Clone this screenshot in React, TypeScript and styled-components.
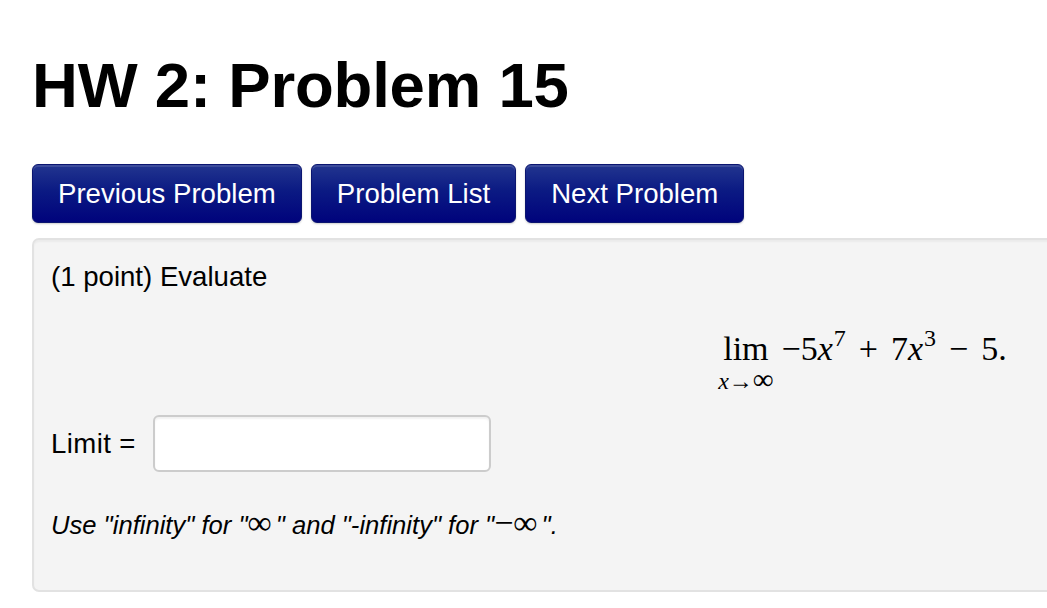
import React from "react";
import styled, { createGlobalStyle } from "styled-components";

const Global = createGlobalStyle`
  html, body { margin: 0; padding: 0; background: #fff; overflow: hidden; }
  body { font-family: "Liberation Sans", Helvetica, Arial, sans-serif; color: #000; }
`;

const Page = styled.div`
  padding: 46px 0 0 32px;
  width: 1700px;
`;

const Title = styled.h1`
  margin: 0;
  font-size: 63.5px;
  line-height: 79px;
  font-weight: bold;
  letter-spacing: -0.2px;
`;

const Nav = styled.div`
  display: flex;
  gap: 9px;
  margin-top: 39px;
`;

const NavButton = styled.button`
  height: 59px;
  padding: 0 25px;
  font-family: "Liberation Sans", Helvetica, Arial, sans-serif;
  font-size: 27.6px;
  color: #fff;
  border: 1px solid #0b1570;
  border-radius: 6px;
  background: linear-gradient(to bottom, #22358f 0%, #0b1a83 45%, #00037c 100%);
  box-shadow: inset 0 2px 0 rgba(255, 255, 255, 0.12), 0 1px 2px rgba(0, 0, 0, 0.2);
  cursor: pointer;
`;

const Panel = styled.div`
  margin-top: 15px;
  width: 1660px;
  box-sizing: border-box;
  background: #f4f4f4;
  border: 2px solid #e2e2e2;
  border-radius: 7px;
  box-shadow: inset 0 2px 2px rgba(0, 0, 0, 0.04);
  padding: 18px 16px 46px 17px;
  font-size: 27.6px;
  line-height: 38px;
`;

const Para = styled.p`
  margin: 0;
`;

const MathRow = styled.div`
  display: flex;
  justify-content: center;
  margin-top: 36px;
  font-family: "Liberation Serif", "Times New Roman", serif;
  font-size: 34px;
  line-height: 1;
`;

const Expr = styled.span`
  display: inline-flex;
  align-items: flex-start;
  white-space: pre;
`;

const LimOp = styled.span`
  display: inline-flex;
  flex-direction: column;
  align-items: center;
  margin-right: 8px;
`;

const LimSub = styled.span`
  font-size: 24px;
  line-height: 24px;
  margin-top: 3px;
`;

const SubInfinity = styled.span`
  font-family: "Liberation Serif", serif;
  font-size: 29px;
  line-height: 0;
`;

const Var = styled.i`
  font-style: italic;
`;

const Sup = styled.sup`
  font-size: 24px;
  vertical-align: top;
  position: relative;
  top: -6px;
  line-height: 1;
  margin-left: 1px;
`;

const Op = styled.span`
  margin: 0 13px;
`;

const AnswerRow = styled.div`
  display: flex;
  align-items: center;
  gap: 17px;
  margin-top: 22px;
`;

const Label = styled.span`
  letter-spacing: 0.4px;
`;

const AnswerInput = styled.input`
  width: 338px;
  height: 57px;
  box-sizing: border-box;
  border: 2px solid #cccccc;
  border-radius: 6px;
  background: #fff;
  box-shadow: inset 0 2px 2px rgba(0, 0, 0, 0.06);
  font-size: 27px;
  padding: 0 10px;
`;

const Hint = styled.p`
  margin: 34px 0 0;
  font-style: italic;
  font-size: 25.6px;
`;

const MathSym = styled.span`
  font-style: normal;
  font-family: "Liberation Serif", serif;
  font-size: 34px;
  line-height: 0;
  margin-right: 4px;
`;

export default function App() {
  return (
    <>
      <Global />
      <Page>
        <Title>HW 2: Problem 15</Title>
        <Nav>
          <NavButton>Previous Problem</NavButton>
          <NavButton>Problem List</NavButton>
          <NavButton>Next Problem</NavButton>
        </Nav>
        <Panel>
          <Para>(1 point) Evaluate</Para>
          <MathRow>
            <Expr>
              <LimOp>
                <span>lim</span>
                <LimSub>
                  <Var>x</Var>→<SubInfinity>∞</SubInfinity>
                </LimSub>
              </LimOp>
              <span>
                −5<Var>x</Var>
                <Sup>7</Sup>
                <Op>+</Op>7<Var>x</Var>
                <Sup>3</Sup>
                <Op>−</Op>5.
              </span>
            </Expr>
          </MathRow>
          <AnswerRow>
            <Label>Limit =</Label>
            <AnswerInput type="text" aria-label="Limit" />
          </AnswerRow>
          <Hint>
            Use "infinity" for "<MathSym>∞</MathSym>" and "-infinity" for "<MathSym>−∞</MathSym>".
          </Hint>
        </Panel>
      </Page>
    </>
  );
}
